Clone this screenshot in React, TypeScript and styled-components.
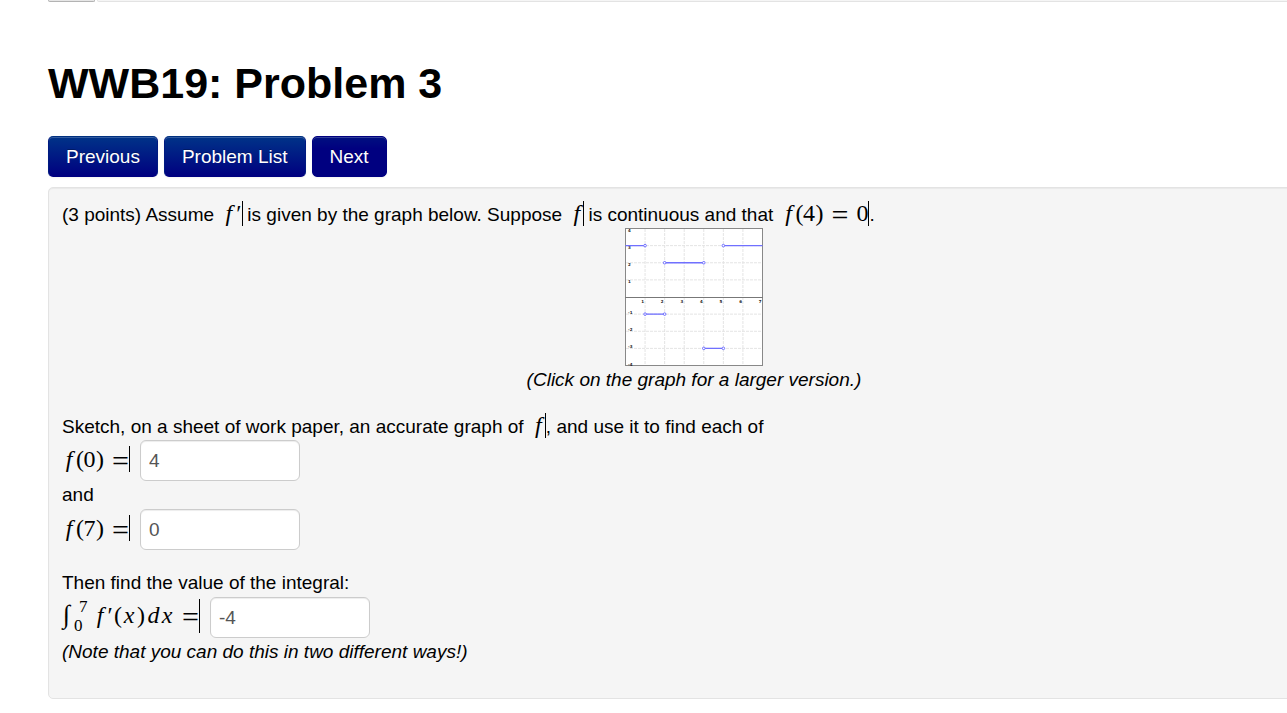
import React from "react";
import styled, { createGlobalStyle } from "styled-components";

const GlobalStyle = createGlobalStyle`
  *, *::before, *::after { box-sizing: border-box; }
  body {
    margin: 0;
    background: #fff;
    color: #000;
    font-family: "Liberation Sans", Arial, sans-serif;
    font-size: 19px;
    line-height: 28px;
    overflow-x: hidden;
  }
`;

/* The content column is wider than the viewport and is clipped on the right. */
const Page = styled.div`
  padding-left: 48px;
  overflow: hidden;
`;

const Content = styled.div`
  margin-right: -53px;
`;

const TopStrip = styled.div`
  display: flex;
  gap: 2px;
  height: 2px;
`;

const ToggleEdge = styled.div`
  width: 47px;
  background: #e6e6e6;
  border: 1px solid #b3b3b3;
  border-top: 0;
  border-radius: 0 0 5px 5px;
`;

const BreadcrumbEdge = styled.div`
  flex: 1;
  background: #f5f5f5;
  border: 1px solid #e3e3e3;
  border-top: 0;
  border-radius: 0 0 0 5px;
`;

const Title = styled.h1`
  margin: 57px 0 29px;
  font-size: 43px;
  line-height: 48px;
  font-weight: bold;
`;

const Nav = styled.nav`
  display: flex;
  gap: 6px;
  margin-bottom: 10px;
`;

const NavButton = styled.button<{ $active?: boolean }>`
  height: 41px;
  padding: 0 17px;
  border: 1px solid;
  border-color: ${(p) => (p.$active ? "#000080" : "#003080 #001a80 #000080")};
  border-radius: 5px;
  background: ${(p) =>
    p.$active
      ? "linear-gradient(#001080, #000080 30%)"
      : "linear-gradient(#003388, #000080)"};
  box-shadow: inset 0 1px 0 rgba(255, 255, 255, 0.2), 0 1px 2px rgba(0, 0, 0, 0.05);
  color: #fff;
  font: inherit;
  text-shadow: 0 -1px 0 rgba(0, 0, 0, 0.25);
  cursor: pointer;
`;

const Panel = styled.form`
  padding: 12px 13px 32px;
  background: #f5f5f5;
  border: 1px solid #e3e3e3;
  border-radius: 5px;
  box-shadow: inset 0 1px 1px rgba(0, 0, 0, 0.05);
`;

const Line = styled.p<{ $gap?: number }>`
  height: 28px;
  margin: ${(p) => p.$gap ?? 0}px 0 0;
  white-space: nowrap;
`;

/* A line with inline formulas sits slightly lower in its row. */
const FormulaLine = styled(Line)`
  line-height: 30px;
`;

const Figure = styled.figure`
  display: flex;
  flex-direction: column;
  align-items: center;
  margin: 0;
`;

const GraphLink = styled.a`
  display: block;
  height: 138px;
`;

const Caption = styled.figcaption`
  font-style: italic;
`;

const AnswerRow = styled.div`
  display: flex;
  align-items: center;
  gap: 10px;
  height: 41px;
`;

const AnswerLabel = styled.label`
  display: flex;
  padding-bottom: 4px;
`;

const AnswerInput = styled.input`
  width: 160px;
  height: 41px;
  padding: 0 8px;
  border: 1px solid #ccc;
  border-radius: 6px;
  background: #fff;
  box-shadow: inset 0 1px 1px rgba(0, 0, 0, 0.075);
  color: #555;
  font: inherit;
`;

const Formula = styled.span`
  display: inline-flex;
  align-items: baseline;
  height: 26px;
  border-right: 1px solid #000;
  font-family: "Liberation Serif", "Times New Roman", serif;
  font-size: 24px;
  line-height: 26px;
`;

const TallFormula = styled(Formula)`
  height: 34px;
  line-height: 32px;
`;

const InlineFormula = styled(Formula)`
  height: 25px;
  line-height: 24px;
  margin: 0 4px 0 3px;
`;

const EndFormula = styled(InlineFormula)`
  margin-right: 0;
`;

const Var = styled.i<{ $w: number }>`
  width: ${(p) => p.$w}px;
  text-align: center;
`;

const Op = styled.span<{ $w: number }>`
  width: ${(p) => p.$w}px;
  text-align: center;
`;

const Equals = styled.span<{ $after?: number }>`
  align-self: flex-start;
  margin: 0 ${(p) => p.$after ?? 0}px 0 9px;
  padding-top: 2px;
  font-size: 30px;
`;

const Integral = styled.span`
  width: 12px;
  padding-left: 1px;
  font-size: 26px;
`;

const Limits = styled.span`
  display: flex;
  flex-direction: column;
  align-self: flex-start;
  width: 20px;
  margin-top: -2px;
  font-size: 17px;
  line-height: 19px;
`;

const UpperLimit = styled.span`
  padding-left: 5px;
`;

const xStep = 137 / 7;
const yStep = 137 / 8;
const px = (x: number) => 0.5 + x * xStep;
const py = (y: number) => 0.5 + (4 - y) * yStep;

const segments = [
  { from: 0, to: 1, y: 3, startOpen: false, endOpen: true },
  { from: 1, to: 2, y: -1, startOpen: true, endOpen: true },
  { from: 2, to: 4, y: 2, startOpen: true, endOpen: true },
  { from: 4, to: 5, y: -3, startOpen: true, endOpen: true },
  { from: 5, to: 7, y: 3, startOpen: true, endOpen: false },
];

function Graph() {
  return (
    <svg width="138" height="138" viewBox="0 0 138 138" role="img" aria-label="Graph of f prime">
      <rect width="138" height="138" fill="#fff" />
      <g stroke="#e4e4e4" strokeWidth="1" strokeDasharray="3 1">
        {[1, 2, 3, 4, 5, 6].map((x) => (
          <line key={x} x1={px(x)} x2={px(x)} y1="1" y2="137" />
        ))}
        {[3, 2, 1, -1, -2, -3].map((y) => (
          <line key={y} x1="1" x2="137" y1={py(y)} y2={py(y)} />
        ))}
      </g>
      <rect x="0.5" y="0.5" width="137" height="137" fill="none" stroke="#888" />
      <line x1="0" x2="138" y1="69.5" y2="69.5" stroke="#777" />
      <g fill="#222" fontFamily="DejaVu Sans" fontSize="4" fontWeight="bold">
        {[1, 2, 3, 4, 5, 6, 7].map((x) => (
          <text key={x} x={px(x) - 1} y="75" textAnchor="end">
            {x}
          </text>
        ))}
        {[4, 3, 2, 1, -1, -2, -3, -4].map((y) => (
          <text key={y} x="3" y={y === -4 ? 138 : py(y) + (y > 0 ? 3 : 0)}>
            {y}
          </text>
        ))}
      </g>
      {segments.map((s) => (
        <g key={s.from} stroke="#7070ff" fill="#fff">
          <line x1={px(s.from)} x2={px(s.to)} y1={py(s.y)} y2={py(s.y)} strokeWidth="1.3" />
          {s.startOpen && <circle cx={px(s.from)} cy={py(s.y)} r="1.3" strokeWidth="1" />}
          {s.endOpen && <circle cx={px(s.to)} cy={py(s.y)} r="1.3" strokeWidth="1" />}
        </g>
      ))}
    </svg>
  );
}

function ValueOf({ at }: { at: number }) {
  return (
    <>
      <Var $w={14}>f</Var>
      <Op $w={7}>(</Op>
      <Op $w={13}>{at}</Op>
      <Op $w={7}>)</Op>
    </>
  );
}

function Answer({ id, value, children }: { id: string; value: string; children: React.ReactNode }) {
  return (
    <AnswerRow>
      <AnswerLabel htmlFor={id}>{children}</AnswerLabel>
      <AnswerInput id={id} type="text" defaultValue={value} />
    </AnswerRow>
  );
}

export default function App() {
  return (
    <Page>
      <GlobalStyle />
      <Content>
        <TopStrip>
          <ToggleEdge />
          <BreadcrumbEdge />
        </TopStrip>
        <Title>WWB19: Problem 3</Title>
        <Nav>
          <NavButton type="button">Previous</NavButton>
          <NavButton type="button">Problem List</NavButton>
          <NavButton type="button" $active>
            Next
          </NavButton>
        </Nav>
        <Panel onSubmit={(e) => e.preventDefault()}>
          <FormulaLine>
            (3 points) Assume{" "}
            <InlineFormula>
              <Var $w={13}>f</Var>
              <Op $w={7}>′</Op>
            </InlineFormula>
            is given by the graph below. Suppose{" "}
            <InlineFormula>
              <Var $w={13}>f</Var>
            </InlineFormula>
            is continuous and that{" "}
            <EndFormula>
              <ValueOf at={4} />
              <Equals $after={8}>=</Equals>0
            </EndFormula>
            .
          </FormulaLine>
          <Figure>
            <GraphLink href="#graph">
              <Graph />
            </GraphLink>
            <Caption>(Click on the graph for a larger version.)</Caption>
          </Figure>
          <FormulaLine $gap={18}>
            Sketch, on a sheet of work paper, an accurate graph of{" "}
            <EndFormula>
              <Var $w={13}>f</Var>
            </EndFormula>
            , and use it to find each of
          </FormulaLine>
          <Answer id="answer-f0" value="4">
            <Formula>
              <ValueOf at={0} />
              <Equals>=</Equals>
            </Formula>
          </Answer>
          <Line>and</Line>
          <Answer id="answer-f7" value="0">
            <Formula>
              <ValueOf at={7} />
              <Equals>=</Equals>
            </Formula>
          </Answer>
          <Line $gap={19}>Then find the value of the integral:</Line>
          <Answer id="answer-integral" value="-4">
            <TallFormula>
              <Integral>∫</Integral>
              <Limits>
                <UpperLimit>7</UpperLimit>
                <span>0</span>
              </Limits>
              <Var $w={12}>f</Var>
              <Op $w={8}>′</Op>
              <Op $w={8}>(</Op>
              <Var $w={14}>x</Var>
              <Op $w={10}>)</Op>
              <Var $w={15}>d</Var>
              <Var $w={12}>x</Var>
              <Equals>=</Equals>
            </TallFormula>
          </Answer>
          <Line>
            <i>(Note that you can do this in two different ways!)</i>
          </Line>
        </Panel>
      </Content>
    </Page>
  );
}
